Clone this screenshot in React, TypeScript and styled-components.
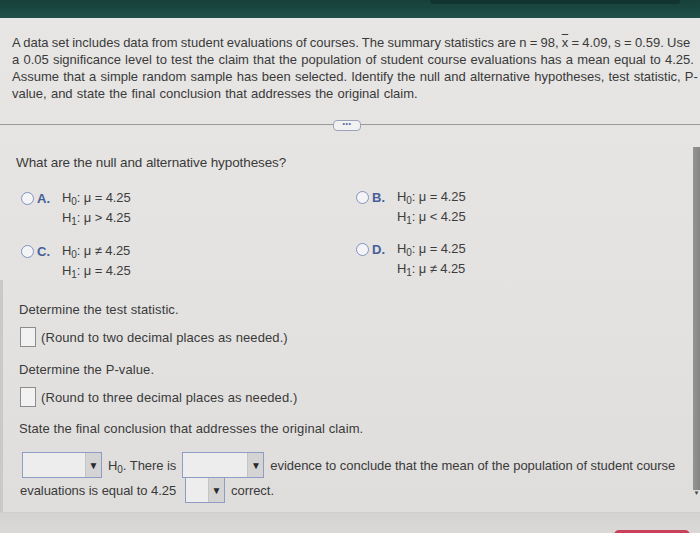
import React from "react";
import styled, { createGlobalStyle } from "styled-components";

const Global = createGlobalStyle`
  html, body { margin: 0; padding: 0; }
  body { width: 700px; height: 533px; overflow: hidden; background: #e4e3e1; font-family: "Liberation Sans", Arial, sans-serif; color: #3b3b3b; }
`;

const Page = styled.div`
  width: 700px;
  height: 533px;
  display: flex;
  flex-direction: column;
  position: relative;
  overflow: hidden;
  background: linear-gradient(180deg, #e7e6e4 0%, #e3e2e0 60%, #dedddb 100%);
`;

const TopBar = styled.div`
  height: 18px;
  flex: none;
  background: linear-gradient(180deg, #17403b 0%, #1f4f49 100%);
  position: relative;
`;

const TopTab = styled.div`
  position: absolute;
  right: 20px;
  top: 0;
  width: 250px;
  height: 4px;
  background: #123430;
  border-radius: 0 0 3px 3px;
`;

const Intro = styled.p`
  margin: 0;
  padding: 16px 0 0 12px;
  font-size: 13px;
  line-height: 17px;
  letter-spacing: 0;
  white-space: nowrap;
  color: #3a3a3a;
`;

const IntroLine = styled.span<{ $ws?: number }>`
  display: block;
  word-spacing: ${(p) => p.$ws ?? 0}px;
`;

const XBar = styled.span`
  text-decoration: overline;
`;

const Divider = styled.div`
  margin-top: 18px;
  height: 10px;
  position: relative;
  display: flex;
  align-items: center;
  justify-content: center;
  &::before {
    content: "";
    position: absolute;
    left: 0;
    right: 0;
    top: 4px;
    height: 1px;
    background: #9a9a98;
  }
`;

const MoreBtn = styled.div`
  position: relative;
  width: 26px;
  height: 9px;
  margin-left: -6px;
  border: 1px solid #9aa3b8;
  border-radius: 4px;
  background: #f1f1f1;
  font-size: 7px;
  line-height: 6px;
  text-align: center;
  color: #5b6f9a;
  font-weight: bold;
  letter-spacing: 0.5px;
`;

const Body = styled.div`
  padding: 25px 0 0 16px;
  display: flex;
  flex-direction: column;
`;

const Question = styled.div`
  font-size: 13.5px;
  line-height: 16px;
  letter-spacing: -0.1px;
  color: #3a3a3a;
`;

const Options = styled.div`
  display: grid;
  grid-template-columns: 335px 1fr;
  row-gap: 15px;
  margin-top: 19px;
  padding-left: 5px;
`;

const Option = styled.div<{ $dy?: number }>`
  display: flex;
  align-items: flex-start;
  margin-top: ${(p) => p.$dy ?? 0}px;
`;

const Radio = styled.span`
  width: 13px;
  height: 13px;
  border: 1.5px solid #8293c2;
  border-radius: 50%;
  background: #f4f4f6;
  box-sizing: border-box;
  margin-top: 2px;
  flex: none;
`;

const Letter = styled.span`
  font-size: 13px;
  font-weight: bold;
  color: #45609a;
  width: 25px;
  margin-left: 3px;
  line-height: 17px;
`;

const Hyp = styled.div`
  display: flex;
  flex-direction: column;
  font-size: 13px;
  line-height: 20px;
  margin-top: -2px;
  letter-spacing: -0.1px;
  color: #3d3d3d;
`;

const Sub = styled.sub`
  font-size: 10px;
  vertical-align: -3px;
  line-height: 0;
`;

const Section = styled.div<{ $mt: number }>`
  margin-top: ${(p) => p.$mt}px;
  padding-left: 3px;
  font-size: 13px;
  line-height: 16px;
  letter-spacing: 0.1px;
  color: #3a3a3a;
`;

const AnswerRow = styled.div`
  display: flex;
  align-items: center;
  gap: 5px;
  margin-top: 9px;
  padding-left: 4px;
  font-size: 13px;
  letter-spacing: 0.1px;
  color: #3a3a3a;
`;

const Box = styled.span`
  width: 16px;
  height: 20px;
  border: 1px solid #8c8c8c;
  background: #f2f2f2;
  box-sizing: border-box;
  flex: none;
`;

const Conclusion = styled.div`
  margin-top: 16px;
  padding-left: 6px;
  font-size: 13px;
  letter-spacing: -0.05px;
  color: #3a3a3a;
  display: flex;
  flex-direction: column;
`;

const CLine = styled.div`
  display: flex;
  align-items: center;
  gap: 6px;
  white-space: nowrap;
  margin-top: -1px;
`;

const Lead = styled.span`
  width: 159px;
  margin-left: -2px;
`;

const Select = styled.span<{ $w: number }>`
  width: ${(p) => p.$w}px;
  height: 26px;
  border: 1px solid #8f9dc4;
  background: #ededed;
  box-sizing: border-box;
  display: flex;
  justify-content: flex-end;
  flex: none;
`;

const Arrow = styled.span`
  width: 15px;
  background: #d4d4d4;
  border-left: 1px solid #c4c4c4;
  display: flex;
  align-items: center;
  justify-content: center;
  font-size: 10px;
  color: #2a2a2a;
`;

const Scrollbar = styled.div`
  position: absolute;
  right: 0;
  top: 147px;
  width: 7px;
  height: 343px;
  background: linear-gradient(90deg, #949492, #858583);
`;

const ScrollArrow = styled.div`
  position: absolute;
  right: 0;
  top: 490px;
  width: 7px;
  height: 8px;
  font-size: 6px;
  color: #444;
  text-align: center;
`;

const BottomBand = styled.div`
  position: absolute;
  left: 0;
  right: 0;
  bottom: 0;
  height: 20px;
  background: linear-gradient(180deg, #d4d3d1, #dad9d7);
  border-top: 1px solid #cfcecc;
`;

const RedBtn = styled.div`
  position: absolute;
  right: 10px;
  bottom: -6px;
  width: 76px;
  height: 9px;
  border-radius: 5px 5px 0 0;
  background: #c9405a;
`;

const LeftEdge = styled.div`
  position: absolute;
  left: 0;
  top: 280px;
  width: 3px;
  height: 233px;
  background: #cac9c7;
`;

const H = ({ n }: { n: string }) => (
  <span>
    H<Sub>{n}</Sub>
  </span>
);

const opts = [
  { l: "A.", h0: "μ = 4.25", h1: "μ > 4.25", dy: 0 },
  { l: "B.", h0: "μ = 4.25", h1: "μ < 4.25", dy: -1 },
  { l: "C.", h0: "μ ≠ 4.25", h1: "μ = 4.25", dy: 0 },
  { l: "D.", h0: "μ = 4.25", h1: "μ ≠ 4.25", dy: -2 },
];

export default function App() {
  return (
    <>
      <Global />
      <Page>
        <TopBar>
          <TopTab />
        </TopBar>
        <Intro>
          <IntroLine $ws={-0.4}>
            A data set includes data from student evaluations of courses. The summary statistics are n = 98, <XBar>x</XBar> = 4.09, s = 0.59. Use
          </IntroLine>
          <IntroLine $ws={0.6}>
            a 0.05 significance level to test the claim that the population of student course evaluations has a mean equal to 4.25.
          </IntroLine>
          <IntroLine $ws={0.6}>
            Assume that a simple random sample has been selected. Identify the null and alternative hypotheses, test statistic, P-
          </IntroLine>
          <IntroLine $ws={0.6}>value, and state the final conclusion that addresses the original claim.</IntroLine>
        </Intro>
        <Divider>
          <MoreBtn>•••</MoreBtn>
        </Divider>
        <Body>
          <Question>What are the null and alternative hypotheses?</Question>
          <Options>
            {opts.map((o) => (
              <Option key={o.l} $dy={o.dy}>
                <Radio />
                <Letter>{o.l}</Letter>
                <Hyp>
                  <span>
                    <H n="0" />: {o.h0}
                  </span>
                  <span>
                    <H n="1" />: {o.h1}
                  </span>
                </Hyp>
              </Option>
            ))}
          </Options>
          <Section $mt={21}>Determine the test statistic.</Section>
          <AnswerRow>
            <Box />
            (Round to two decimal places as needed.)
          </AnswerRow>
          <Section $mt={15}>Determine the P-value.</Section>
          <AnswerRow>
            <Box />
            (Round to three decimal places as needed.)
          </AnswerRow>
          <Section $mt={14}>State the final conclusion that addresses the original claim.</Section>
          <Conclusion>
            <CLine>
              <Select $w={80}>
                <Arrow>▼</Arrow>
              </Select>
              <span>
                <H n="0" />. There is
              </span>
              <Select $w={82}>
                <Arrow>▼</Arrow>
              </Select>
              <span>evidence to conclude that the mean of the population of student course</span>
            </CLine>
            <CLine>
              <Lead>evaluations is equal to 4.25</Lead>
              <Select $w={40}>
                <Arrow>▼</Arrow>
              </Select>
              <span>correct.</span>
            </CLine>
          </Conclusion>
        </Body>
        <Scrollbar />
        <ScrollArrow>▼</ScrollArrow>
        <LeftEdge />
        <BottomBand>
          <RedBtn />
        </BottomBand>
      </Page>
    </>
  );
}
